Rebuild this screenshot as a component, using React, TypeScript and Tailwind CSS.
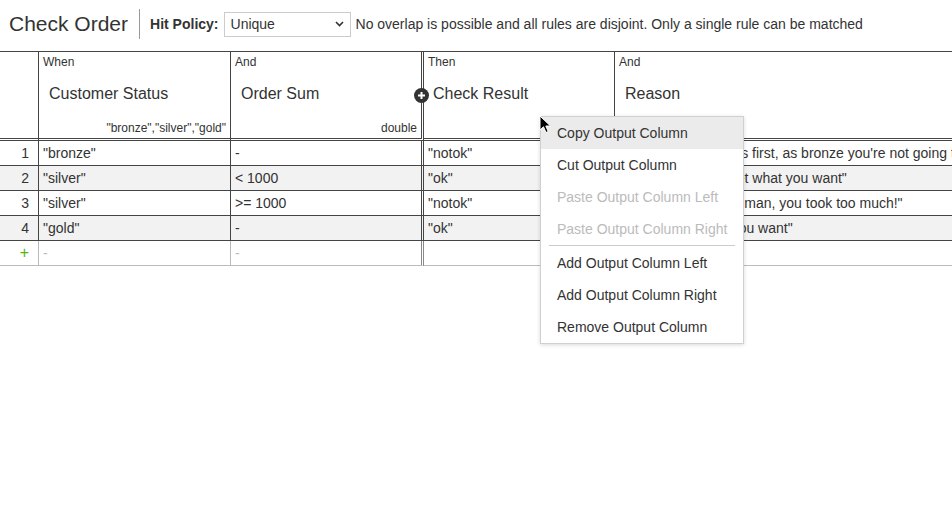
import React from "react";

const rows = [
  { status: '"bronze"', sum: "-", result: '"notok"', reason: '"Work on your status first, as bronze you\'re not going to get anything"' },
  { status: '"silver"', sum: "< 1000", result: '"ok"', reason: '"Thank you. Now get what you want"' },
  { status: '"silver"', sum: ">= 1000", result: '"notok"', reason: '"Sorry, my good old man, you took too much!"' },
  { status: '"gold"', sum: "-", result: '"ok"', reason: '"You get anything you want"' },
];

const menu: (string | null)[] = [
  "Copy Output Column",
  "Cut Output Column",
  "Paste Output Column Left",
  "Paste Output Column Right",
  null,
  "Add Output Column Left",
  "Add Output Column Right",
  "Remove Output Column",
];

const disabled = ["Paste Output Column Left", "Paste Output Column Right"];

const HeaderCell = ({
  label,
  name,
  type,
  namePad = "pl-[10px]",
}: {
  label: string;
  name: string;
  type?: string;
  namePad?: string;
}) => (
  <div className="flex h-[86px] flex-col">
    <div className="pl-1 pt-[3px] text-[12px] leading-[14px]">{label}</div>
    <div className={`mt-[15px] text-[16px] leading-5 ${namePad}`}>{name}</div>
    {type && (
      <div className="mt-auto pb-[3px] pr-1 text-right text-[12px] leading-[13px]">
        {type}
      </div>
    )}
  </div>
);

export default function App() {
  return (
    <div
      className="relative h-[530px] w-[952px] overflow-hidden bg-white text-[#333]"
      style={{ fontFamily: '"Liberation Sans", Arial, sans-serif' }}
    >
      {/* top bar */}
      <div className="flex h-[48px] items-center pl-[9px]">
        <span className="text-[21px] leading-6">Check Order</span>
        <span className="ml-[11px] h-[30px] w-px bg-[#999]" />
        <span className="ml-[10px] text-[14px] font-bold">Hit Policy:</span>
        <div className="ml-[5px] flex h-[25px] w-[127px] items-center justify-between border border-[#ccc] pl-[6px] pr-[6px] text-[14px]">
          <span>Unique</span>
          <svg width="9" height="6" viewBox="0 0 9 6">
            <path d="M1 1 L4.5 4.5 L8 1" fill="none" stroke="#333" strokeWidth="1.6" />
          </svg>
        </div>
        <span className="ml-[5px] text-[14px]">
          No overlap is possible and all rules are disjoint. Only a single rule can be matched
        </span>
      </div>

      {/* decision table */}
      <table
        className="mt-[3px] table-fixed border-separate text-[14px]"
        style={{ borderSpacing: 0, width: 1100 }}
      >
        <colgroup>
          <col className="w-[39px]" />
          <col className="w-[192px]" />
          <col className="w-[193px]" />
          <col className="w-[191px]" />
          <col />
        </colgroup>
        <thead>
          <tr>
            <th className="border-b-[3px] border-r border-t border-double border-[#444] p-0 font-normal" />
            <th className="border-b-[3px] border-r border-t border-[#444] p-0 text-left font-normal [border-bottom-style:double]">
              <HeaderCell label="When" name="Customer Status" type={'"bronze","silver","gold"'} />
            </th>
            <th className="relative border-b-[3px] border-r-[3px] border-t border-double border-[#444] p-0 text-left font-normal [border-top-style:solid]">
              <HeaderCell label="And" name="Order Sum" type="double" />
              <span className="absolute right-[-8px] top-[36px] z-10 flex h-[15px] w-[15px] items-center justify-center rounded-full bg-[#333]">
                <svg width="9" height="9" viewBox="0 0 9 9">
                  <path d="M4.5 1 V8 M1 4.5 H8" stroke="#fff" strokeWidth="2" />
                </svg>
              </span>
            </th>
            <th className="border-b-[3px] border-r border-t border-[#444] p-0 text-left font-normal [border-bottom-style:double]">
              <HeaderCell label="Then" name="Check Result" namePad="pl-[9px]" />
            </th>
            <th className="border-b-[3px] border-t border-[#444] p-0 text-left font-normal [border-bottom-style:double]">
              <HeaderCell label="And" name="Reason" />
            </th>
          </tr>
        </thead>
        <tbody>
          {rows.map((r, i) => {
            const bg = i % 2 === 1 ? "bg-[#f2f2f2]" : "bg-white";
            return (
              <tr key={i} className={bg}>
                <td className="h-[25px] border-b border-r border-[#444] p-0 pr-[9px] text-right leading-6">
                  {i + 1}
                </td>
                <td className="border-b border-r border-[#444] p-0 pl-1 leading-6">{r.status}</td>
                <td className="border-b border-r-[3px] border-double border-[#444] p-0 pl-1 leading-6 [border-bottom-style:solid]">
                  {r.sum}
                </td>
                <td className="border-b border-r border-[#444] p-0 pl-1 leading-6">{r.result}</td>
                <td className="whitespace-nowrap border-b border-[#444] p-0 pl-1 leading-6">
                  {r.reason}
                </td>
              </tr>
            );
          })}
          <tr>
            <td className="h-[25px] border-b border-r border-[#bbb] p-0 pr-[9px] text-right text-[16px] leading-6 text-[#52b415]">
              +
            </td>
            <td className="border-b border-r border-[#bbb] p-0 pl-1 leading-6 text-[#bbb]">-</td>
            <td className="border-b border-r-[3px] border-double border-[#888] p-0 pl-1 leading-6 text-[#bbb] [border-bottom-color:#bbb] [border-bottom-style:solid]">
              -
            </td>
            <td className="border-b border-r border-[#bbb] p-0" />
            <td className="border-b border-[#bbb] p-0" />
          </tr>
        </tbody>
      </table>

      {/* context menu */}
      <div className="absolute left-[540px] top-[116px] z-20 w-[204px] border border-[#d0d0d0] bg-white shadow-[0_1px_4px_rgba(0,0,0,0.15)]">
        {menu.map((m, i) =>
          m === null ? (
            <div key={i} className="mx-[8px] my-0 h-[2px] border-t border-[#ccc]" />
          ) : (
            <div
              key={i}
              className={`flex h-[32px] items-center pl-[16px] text-[14px] ${
                i === 0 ? "bg-[#ebebeb]" : ""
              } ${disabled.includes(m) ? "text-[#bbb]" : "text-[#333]"}`}
            >
              {m}
            </div>
          )
        )}
      </div>

      {/* mouse cursor */}
      <svg
        className="absolute left-[539px] top-[115px] z-30"
        width="13"
        height="19"
        viewBox="0 0 13 19"
      >
        <path
          d="M1 1 L1 15 L4.5 11.8 L7 17.5 L9.2 16.5 L6.8 11 L11.5 11 Z"
          fill="#000"
          stroke="#fff"
          strokeWidth="1"
          strokeLinejoin="round"
        />
      </svg>
    </div>
  );
}
